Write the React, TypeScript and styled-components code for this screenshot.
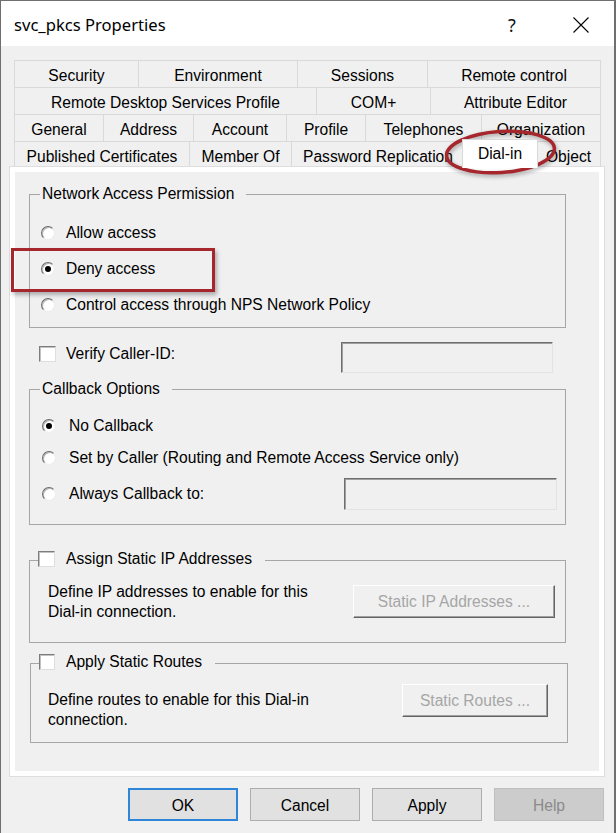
import React from "react";
import styled, { createGlobalStyle, css } from "styled-components";

const UI_FONT = `"Liberation Sans", Arial, sans-serif`;

const GlobalStyle = createGlobalStyle`
  html, body { margin: 0; padding: 0; background: #ffffff; }
  * { box-sizing: border-box; }
`;

const Window = styled.div`
  position: relative;
  width: 616px;
  height: 833px;
  background: #f0f0f0;
  border: 1px solid #6f6f6f;
  border-right-width: 2px;
  border-bottom: none;
  display: flex;
  flex-direction: column;
  font-family: ${UI_FONT};
  font-size: 15.6px;
  color: #000;
  overflow: hidden;
`;

const TitleBar = styled.div`
  height: 45px;
  flex: none;
  background: #ffffff;
  display: flex;
  align-items: center;
  padding: 2px 10px 0 13px;
`;

const TitleText = styled.div`
  font-family: "Noto Sans", "Open Sans", sans-serif;
  font-size: 16.6px;
  color: #000;
  flex: 1;
`;

const TitleButtons = styled.div`
  display: flex;
  gap: 23px;
  height: 100%;
`;

const TitleButton = styled.div`
  width: 46px;
  height: 100%;
  display: flex;
  align-items: center;
  justify-content: center;
  font-family: "Noto Sans", "Open Sans", sans-serif;
  font-size: 18px;
  color: #111;
`;

const Body = styled.div`
  flex: 1;
  display: flex;
  flex-direction: column;
  padding: 14px 10px 0 9px;
`;

const TabStrip = styled.div`
  margin: 0 3px 0 4px;
  display: flex;
  flex-direction: column;
`;

const TabRow = styled.div<{ $h: number }>`
  display: flex;
  height: ${(p) => p.$h}px;
`;

const Tab = styled.div<{ $w: number; $active?: boolean }>`
  flex: none;
  width: ${(p) => p.$w}px;
  display: flex;
  align-items: center;
  justify-content: center;
  padding-top: 4px;
  white-space: nowrap;
  background: #f0f0f0;
  border-top: 1px solid #d9d9d9;
  border-left: 1px solid #d9d9d9;
  &:last-child {
    border-right: 1px solid #d9d9d9;
  }
  ${(p) =>
    p.$active &&
    css`
      position: relative;
      z-index: 1;
      width: ${p.$w + 4}px;
      margin: -2px -2px -1px -2px;
      background: #ffffff;
      border-right: 1px solid #d9d9d9;
      padding-bottom: 5px;
    `}
`;

const Panel = styled.div`
  height: 609px;
  flex: none;
  border: 5px solid #ffffff;
  box-shadow: 0 0 0 1px #dedede;
  background: #f0f0f0;
  display: flex;
  flex-direction: column;
  align-items: flex-start;
  padding-left: 14px;
`;

const Group = styled.fieldset<{ $mt: number; $w?: number; $ml?: number }>`
  margin: ${(p) => p.$mt}px 0 0 ${(p) => p.$ml ?? 0}px;
  width: ${(p) => p.$w ?? 537}px;
  padding: 0;
  border: 1px solid #a6a6a6;
  min-width: 0;
`;

const TextLegend = styled.legend`
  margin-left: 10px;
  padding: 0 12px 0 2px;
  line-height: 18px;
`;

const CheckLegend = styled.legend`
  margin-left: 8px;
  padding: 0 13px 0 0;
`;

const LegendInner = styled.span<{ $gap: number }>`
  display: inline-flex;
  align-items: center;
  gap: ${(p) => p.$gap}px;
  height: 20px;
`;

const GroupContent = styled.div<{ $pt: number; $pb: number; $pl: number; $pr?: number }>`
  padding: ${(p) => p.$pt}px ${(p) => p.$pr ?? 0}px ${(p) => p.$pb}px ${(p) => p.$pl}px;
  display: flex;
  flex-direction: column;
`;

const OptionRow = styled.div<{ $h: number; $gap: number; $mt?: number }>`
  display: flex;
  align-items: center;
  height: ${(p) => p.$h}px;
  gap: ${(p) => p.$gap}px;
  margin-top: ${(p) => p.$mt ?? 0}px;
  white-space: nowrap;
`;

const Radio = styled.span<{ $checked?: boolean }>`
  flex: none;
  width: 14px;
  height: 14px;
  border-radius: 50%;
  background: #ffffff;
  border: 1px solid;
  border-color: #6c6c6c #ececec #ececec #6c6c6c;
  box-shadow: inset 1px 1px 0 #b4b4b4;
  display: flex;
  align-items: center;
  justify-content: center;
  &::after {
    content: "";
    width: 6px;
    height: 6px;
    border-radius: 50%;
    background: #000;
    display: ${(p) => (p.$checked ? "block" : "none")};
  }
`;

const CheckBox = styled.span<{ $w?: number }>`
  flex: none;
  width: ${(p) => p.$w ?? 16}px;
  height: 16px;
  background: #ffffff;
  border: 1px solid;
  border-color: #7d7d7d #dedede #dedede #7d7d7d;
  box-shadow: inset 1px 1px 0 #c2c2c2;
`;

const Sunken = styled.div<{ $w: number; $h: number }>`
  flex: none;
  width: ${(p) => p.$w}px;
  height: ${(p) => p.$h}px;
  margin-left: auto;
  background: #f0f0f0;
  border: 1px solid;
  border-color: #6e6e6e #e3e3e3 #e3e3e3 #6e6e6e;
  box-shadow: inset 1px 1px 0 #a0a0a0;
`;

const VerifyRow = styled.div`
  margin-top: 14px;
  width: 537px;
  padding: 0 13px 0 10px;
  display: flex;
  align-items: flex-start;
`;

const VerifyLabel = styled.div`
  display: flex;
  align-items: center;
  gap: 10px;
  height: 20px;
  margin-top: 2px;
`;

const DescRow = styled.div`
  display: flex;
  align-items: flex-start;
`;

const Desc = styled.div<{ $pt?: number }>`
  max-width: 285px;
  line-height: 20px;
  padding-top: ${(p) => p.$pt ?? 0}px;
`;

const ClassicButton = styled.div<{ $w: number; $mt: number }>`
  flex: none;
  margin-left: auto;
  margin-top: ${(p) => p.$mt}px;
  width: ${(p) => p.$w}px;
  height: 33px;
  display: flex;
  align-items: center;
  justify-content: center;
  background: #f0f0f0;
  border: 1px solid;
  border-color: #ffffff #646464 #646464 #ffffff;
  box-shadow: inset -1px -1px 0 #a0a0a0;
  color: #a6a6a6;
  white-space: nowrap;
`;

const ButtonRow = styled.div`
  margin-top: 12px;
  display: flex;
  justify-content: flex-end;
  gap: 12px;
`;

const DialogButton = styled.div<{ $variant?: "default" | "disabled" }>`
  width: 110px;
  height: 33px;
  display: flex;
  align-items: center;
  justify-content: center;
  padding-top: 2px;
  background: #e1e1e1;
  border: 1px solid #adadad;
  color: #000;
  ${(p) =>
    p.$variant === "default" &&
    css`
      border: 2px solid #2f86d8;
    `}
  ${(p) =>
    p.$variant === "disabled" &&
    css`
      background: #cccccc;
      border-color: #bfbfbf;
      color: #8a8a8a;
    `}
`;

const HighlightBox = styled.div`
  position: absolute;
  left: 10px;
  top: 247px;
  width: 204px;
  height: 44px;
  border: 3px solid #a5262c;
  box-shadow: 2px 3px 4px rgba(0, 0, 0, 0.28);
  pointer-events: none;
`;

const HighlightEllipse = styled.svg`
  position: absolute;
  left: 439px;
  top: 124px;
  overflow: visible;
  filter: drop-shadow(1px 2px 2px rgba(0, 0, 0, 0.35));
  pointer-events: none;
`;

const tabRows: { h: number; tabs: { label: string; w: number; active?: boolean }[] }[] = [
  {
    h: 27,
    tabs: [
      { label: "Security", w: 124 },
      { label: "Environment", w: 159 },
      { label: "Sessions", w: 130 },
      { label: "Remote control", w: 174 },
    ],
  },
  {
    h: 27,
    tabs: [
      { label: "Remote Desktop Services Profile", w: 302 },
      { label: "COM+", w: 114 },
      { label: "Attribute Editor", w: 171 },
    ],
  },
  {
    h: 27,
    tabs: [
      { label: "General", w: 89 },
      { label: "Address", w: 90 },
      { label: "Account", w: 93 },
      { label: "Profile", w: 79 },
      { label: "Telephones", w: 116 },
      { label: "Organization", w: 120 },
    ],
  },
  {
    h: 26,
    tabs: [
      { label: "Published Certificates", w: 175 },
      { label: "Member Of", w: 102 },
      { label: "Password Replication", w: 173 },
      { label: "Dial-in", w: 72, active: true },
      { label: "Object", w: 65 },
    ],
  },
];

export default function App() {
  return (
    <>
      <GlobalStyle />
      <Window>
        <TitleBar>
          <TitleText>svc_pkcs Properties</TitleText>
          <TitleButtons>
            <TitleButton>?</TitleButton>
            <TitleButton>
              <svg width="16" height="16" viewBox="0 0 16 16">
                <path d="M0.5 0.5 L15.5 15.5 M15.5 0.5 L0.5 15.5" stroke="#000" strokeWidth="1.1" fill="none" />
              </svg>
            </TitleButton>
          </TitleButtons>
        </TitleBar>

        <Body>
          <TabStrip>
            {tabRows.map((row, i) => (
              <TabRow key={i} $h={row.h}>
                {row.tabs.map((t) => (
                  <Tab key={t.label} $w={t.w} $active={t.active}>
                    {t.label}
                  </Tab>
                ))}
              </TabRow>
            ))}
          </TabStrip>

          <Panel>
            <Group $mt={13}>
              <TextLegend>Network Access Permission</TextLegend>
              <GroupContent $pt={12} $pb={4} $pl={11}>
                <OptionRow $h={36} $gap={11}>
                  <Radio />
                  Allow access
                </OptionRow>
                <OptionRow $h={36} $gap={11}>
                  <Radio $checked />
                  Deny access
                </OptionRow>
                <OptionRow $h={36} $gap={11}>
                  <Radio />
                  Control access through NPS Network Policy
                </OptionRow>
              </GroupContent>
            </Group>

            <VerifyRow>
              <VerifyLabel>
                <CheckBox $w={17} />
                Verify Caller-ID:
              </VerifyLabel>
              <Sunken $w={212} $h={31} />
            </VerifyRow>

            <Group $mt={7}>
              <TextLegend>Callback Options</TextLegend>
              <GroupContent $pt={12} $pb={14} $pl={12} $pr={8}>
                <OptionRow $h={32} $gap={13}>
                  <Radio $checked />
                  No Callback
                </OptionRow>
                <OptionRow $h={32} $gap={13}>
                  <Radio />
                  Set by Caller (Routing and Remote Access Service only)
                </OptionRow>
                <OptionRow $h={32} $gap={13} $mt={4}>
                  <Radio />
                  Always Callback to:
                  <Sunken $w={213} $h={32} />
                </OptionRow>
              </GroupContent>
            </Group>

            <Group $mt={24}>
              <CheckLegend>
                <LegendInner $gap={11}>
                  <CheckBox $w={17} />
                  Assign Static IP Addresses
                </LegendInner>
              </CheckLegend>
              <GroupContent $pt={11} $pb={20} $pl={18} $pr={10}>
                <DescRow>
                  <Desc>Define IP addresses to enable for this Dial-in connection.</Desc>
                  <ClassicButton $w={202} $mt={3}>
                    Static IP Addresses ...
                  </ClassicButton>
                </DescRow>
              </GroupContent>
            </Group>

            <Group $mt={9} $ml={1} $w={538}>
              <CheckLegend>
                <LegendInner $gap={11}>
                  <CheckBox />
                  Apply Static Routes
                </LegendInner>
              </CheckLegend>
              <GroupContent $pt={10} $pb={12} $pl={17} $pr={19}>
                <DescRow>
                  <Desc $pt={6}>Define routes to enable for this Dial-in connection.</Desc>
                  <ClassicButton $w={146} $mt={0}>
                    Static Routes ...
                  </ClassicButton>
                </DescRow>
              </GroupContent>
            </Group>
          </Panel>

          <ButtonRow>
            <DialogButton $variant="default">OK</DialogButton>
            <DialogButton>Cancel</DialogButton>
            <DialogButton>Apply</DialogButton>
            <DialogButton $variant="disabled">Help</DialogButton>
          </ButtonRow>
        </Body>

        <HighlightBox />
        <HighlightEllipse width="120" height="56" viewBox="0 0 120 56">
          <ellipse
            cx="60.5"
            cy="27"
            rx="54"
            ry="20.5"
            fill="none"
            stroke="#a5262c"
            strokeWidth="3.5"
            transform="rotate(-4 60.5 27)"
          />
        </HighlightEllipse>
      </Window>
    </>
  );
}
